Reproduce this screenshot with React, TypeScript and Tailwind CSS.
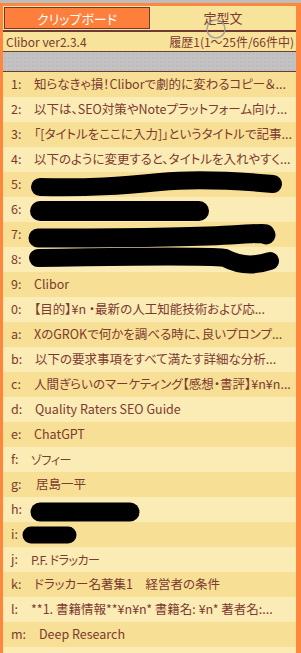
import React from "react";

type Row = { k: string; t: string; pad?: string; thin?: boolean };

const rows: Row[] = [
  { k: "1", t: "知らなきゃ損！Cliborで劇的に変わるコピー＆..." },
  { k: "2", t: "以下は、SEO対策やNoteプラットフォーム向け..." },
  { k: "3", t: "「[タイトルをここに入力]」というタイトルで記事..." },
  { k: "4", t: "以下のように変更すると、タイトルを入れやすく..." },
  { k: "5", t: "" },
  { k: "6", t: "" },
  { k: "7", t: "" },
  { k: "8", t: "　　　　　　　　　　 ...2H" },
  { k: "9", t: "Clibor" },
  { k: "0", t: "【目的】¥n ・最新の人工知能技術および応..." },
  { k: "a", t: "XのGROKで何かを調べる時に、良いプロンプ..." },
  { k: "b", t: "以下の要求事項をすべて満たす詳細な分析...", pad: "pl-[1px]" },
  { k: "c", t: "人間ぎらいのマーケティング【感想・書評】¥n¥n..." },
  { k: "d", t: "Quality Raters SEO Guide", pad: "pl-[1px]" },
  { k: "e", t: "ChatGPT" },
  { k: "f", t: "ゾフィー", pad: "-ml-[3px]", thin: true },
  { k: "g", t: "居島一平", pad: "pl-[2px]" },
  { k: "h", t: "" },
  { k: "i", t: "" },
  { k: "j", t: "P.F. ドラッカー", pad: "-ml-[3px]", thin: true },
  { k: "k", t: "ドラッカー名著集1　経営者の条件" },
  { k: "l", t: "**1. 書籍情報**¥n¥n* 書籍名: ¥n* 著者名:...", pad: "-ml-[3px]" },
  { k: "m", t: "Deep Research", pad: "pl-[5px]" },
  { k: "", t: "" },
];

export default function App() {
  return (
    <div
      className="relative w-[301px] h-[653px] overflow-hidden bg-[#ff873d] text-[#7c3a30] [font-feature-settings:'palt']"
      style={{ fontFamily: '"Noto Sans CJK JP", "Noto Sans", sans-serif' }}
    >
      <div className="h-[3px] bg-[#bdbdbd]" />
      <div className="pt-[3px] pl-[3px] pr-[5px] h-[650px]">
        <div className="h-full flex flex-col bg-[#f8e39b] overflow-hidden">
          {/* tabs */}
          <div className="h-[24px] flex shrink-0">
            <div className="mt-[1px] ml-[1px] w-[146px] h-[22px] bg-[#fe7f3c] border border-[#6e3a33] flex items-center justify-center text-white text-[13px] leading-none">
              クリップボード
            </div>
            <div className="flex-1 flex items-center justify-center text-[13px] leading-none pb-[1px]">
              定型文
            </div>
          </div>
          <div className="h-[2px] bg-[#6e3a33] shrink-0" />
          {/* header */}
          <div className="h-[19px] flex items-center justify-between pl-[3px] pr-[2px] text-[12px] leading-none shrink-0">
            <span>Clibor ver2.3.4</span>
            <span>履歴1(1〜25件/66件中)</span>
          </div>
          <div className="h-[1px] bg-[#6e3a33] shrink-0" />
          <div className="h-[19px] bg-[#c2c2c2] shrink-0 bg-[radial-gradient(circle,#b4b4b4_0.6px,transparent_0.8px)] bg-[length:4px_4px]" />
          <div className="h-[1px] bg-[#6e3a33] shrink-0" />
          {/* rows */}
          <div className="flex flex-col">
            {rows.map((r, i) => (
              <div
                key={i}
                className={
                  "h-[25px] shrink-0 flex items-center pl-[8px] text-[12.5px] leading-none whitespace-nowrap " +
                  (i % 2 === 0 ? "bg-[#f7df95]" : "bg-[#fbebb4]")
                }
              >
                <span className="w-[23px] shrink-0">{r.k ? r.k + ":" : ""}</span>
                <span className={(r.pad ?? "") + (r.thin ? " text-[12px] tracking-[-0.5px]" : "")}>{r.t}</span>
              </div>
            ))}
          </div>
        </div>
      </div>

      {/* redaction marker strokes and cursor ring */}
      <svg className="absolute inset-0 pointer-events-none" width="301" height="653" viewBox="0 0 301 653">
        <g fill="none" stroke="#000" strokeLinecap="round" strokeLinejoin="round">
          <path d="M40 187 C 90 188, 120 186, 160 182 S 240 181, 273 184" strokeWidth="18" />
          <path d="M40 211 L 199 211" strokeWidth="20" />
          <path d="M38 238 C 100 238, 180 238, 230 235 S 260 234, 266 235" strokeWidth="19" />
          <path d="M38 258 C 120 257, 200 255, 225 258 C 240 266, 255 266, 270 261" strokeWidth="18" />
          <path d="M40 512 L 130 512" strokeWidth="19" />
          <path d="M31 535 L 68 535" strokeWidth="17" />
        </g>
        <circle cx="216" cy="29" r="9" fill="none" stroke="#9a9a9a" strokeWidth="1.5" opacity="0.85" />
      </svg>
    </div>
  );
}
